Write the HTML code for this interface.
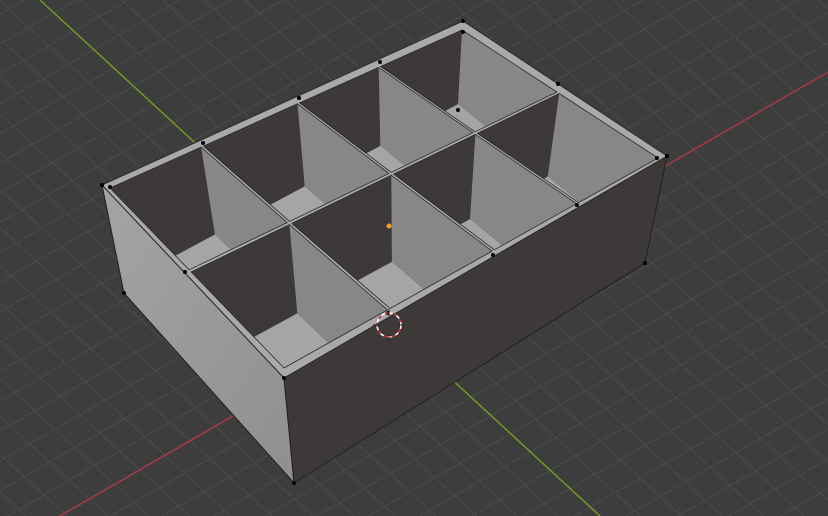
<!DOCTYPE html>
<html><head><meta charset="utf-8"><style>
html,body{margin:0;padding:0;background:#3d3d3d;overflow:hidden;width:828px;height:516px}
svg{display:block}
</style></head><body>
<svg id="s" width="828" height="516" viewBox="0 0 828 516" xmlns="http://www.w3.org/2000/svg">
<rect width="828" height="516" fill="#3d3d3d"/>
<g id="grid" stroke="#4b4b4b" stroke-width="1"></g>
<line x1="40" y1="0" x2="600" y2="516" stroke="#6f9a22" stroke-width="1.5"/>
<line x1="828" y1="72" x2="60" y2="516" stroke="#a43a45" stroke-width="1.5"/>
<g id="box"></g>
</svg>
<script>
var NS="http://www.w3.org/2000/svg";
var grid=document.getElementById('grid');
function ln(g,x1,y1,x2,y2,c,w){var l=document.createElementNS(NS,'line');l.setAttribute('x1',x1);l.setAttribute('y1',y1);l.setAttribute('x2',x2);l.setAttribute('y2',y2);if(c)l.setAttribute('stroke',c);if(w)l.setAttribute('stroke-width',w);g.appendChild(l);}
for(var k=-40;k<=40;k++){var ox=40+k*29*0.87, oy=0-k*29*0.5;
 ln(grid,ox-1000*0.735,oy-1000*0.678,ox+1000*0.735,oy+1000*0.678);}
for(var k=-40;k<=40;k++){var ox=828+k*27*0.735, oy=72+k*27*0.678;
 ln(grid,ox-1000*0.866,oy+1000*0.5,ox+1000*0.866,oy-1000*0.5);}
var box=document.getElementById('box');
function poly(pts,fill,stroke,sw,clip){var p=document.createElementNS(NS,'polygon');p.setAttribute('points',pts.map(function(q){return q[0].toFixed(1)+','+q[1].toFixed(1)}).join(' '));p.setAttribute('fill',fill);if(stroke){p.setAttribute('stroke',stroke);p.setAttribute('stroke-width',sw||1);p.setAttribute('stroke-linejoin','round');}if(clip)p.setAttribute('clip-path','url(#'+clip+')');box.appendChild(p);return p;}
var A=[102,185],B=[463,21],C=[667,156],D=[284,378];
var Ab=[124,293],Db=[294,483],Cb=[645,263];
var lg=document.createElementNS(NS,'linearGradient');lg.setAttribute('id','lf');lg.setAttribute('x1','0');lg.setAttribute('y1','0');lg.setAttribute('x2','1');lg.setAttribute('y2','1');
lg.innerHTML='<stop offset="0" stop-color="#a4a4a4"/><stop offset="1" stop-color="#8f8f8f"/>';
var defs=document.createElementNS(NS,'defs');defs.appendChild(lg);box.appendChild(defs);
poly([A,Ab,Db,D],'url(#lf)','#222',1);
poly([D,Db,Cb,C],'#3d3938','#222',1);
poly([A,B,C,D],'#a9a9a9','#2a2a2a',1);
var a=[110,188],b=[462,30],c=[658,158],d=[284,368];
var ha=[20,92],hb=[-4,74],hc=[-19,92],hd=[9,90];
function bl(P,Q,R,S,u,v){return [(1-u)*(1-v)*P[0]+u*(1-v)*Q[0]+u*v*R[0]+(1-u)*v*S[0],(1-u)*(1-v)*P[1]+u*(1-v)*Q[1]+u*v*R[1]+(1-u)*v*S[1]];}
var UT=[0,.262,.536,.766,1],UB=[0,.28,.56,.785,1];
var VL=[0,.46,1],VR=[0,.49,1];
// grid coordinate: column index fraction s (0..4), row index r (0..2) continuous via lerp
function uv(s,r){ // s,r real
 var i=Math.min(3,Math.floor(s)),fs=s-i; var j=Math.min(1,Math.floor(r)),fr=r-j;
 var vl=VL[j]+(VL[j+1]-VL[j])*fr, vr=VR[j]+(VR[j+1]-VR[j])*fr;
 var ut=UT[i]+(UT[i+1]-UT[i])*fs, ub=UB[i]+(UB[i+1]-UB[i])*fs;
 // approximate: v depends on u, u depends on v
 var u=ut,v=vl;for(var k=0;k<4;k++){v=vl+(vr-vl)*u;u=ut+(ub-ut)*v;}
 return [u,v];}
function P(s,r){var q=uv(s,r);return bl(a,b,c,d,q[0],q[1]);}
function H(s,r){var q=uv(s,r),p=bl(a,b,c,d,q[0],q[1]),h=bl(ha,hb,hc,hd,q[0],q[1]);return [p[0]+h[0],p[1]+h[1]];}
var t=0.012;
for(var i=0;i<4;i++)for(var j=0;j<2;j++){
 var u0=i+(i?t:0),u1=i+1-(i<3?t:0),v0=j+(j?t:0),v1=j+1-(j<1?t:0);
 var TL=P(u0,v0),TR=P(u1,v0),FR=P(u1,v1),FL=P(u0,v1);
 var id='c'+i+j;
 var cp=document.createElementNS(NS,'clipPath');cp.setAttribute('id',id);
 var pp=document.createElementNS(NS,'polygon');pp.setAttribute('points',[TL,TR,FR,FL].map(function(q){return q.join(',')}).join(' '));cp.appendChild(pp);defs.appendChild(cp);
 poly([TL,TR,FR,FL],'#3d3938');
 poly([H(u0,v0),H(u1,v0),H(u1,v1),H(u0,v1)],'#a5a5a5',null,0,id);
 poly([TL,TR,H(u1,v0),H(u0,v0)],'#3d3938',null,0,id);
 poly([TR,FR,H(u1,v1),H(u1,v0)],'#878787',null,0,id);
 poly([TL,TR,FR,FL],'none','#2b2b2b',0.8);
}
var vx=[A,B,C,D,Ab,Db,Cb,[203,143],[299,98],[380,62],[558,84],[185,272],[388,313],[493,255],[577,205],[110,187],[458,110],[463,32],[657,158]];
vx.forEach(function(q){var ci=document.createElementNS(NS,'circle');ci.setAttribute('cx',q[0]);ci.setAttribute('cy',q[1]);ci.setAttribute('r',2);ci.setAttribute('fill','#000');box.appendChild(ci);});
var o=document.createElementNS(NS,'circle');o.setAttribute('cx',389);o.setAttribute('cy',226);o.setAttribute('r',2.5);o.setAttribute('fill','#f0a020');box.appendChild(o);
var g=document.createElementNS(NS,'g');g.innerHTML='<circle cx="389" cy="325" r="12" fill="none" stroke="#fff" stroke-width="1.5" stroke-dasharray="4 4"/><circle cx="389" cy="325" r="12" fill="none" stroke="#d03030" stroke-width="1.5" stroke-dasharray="4 4" stroke-dashoffset="4"/><line x1="373" y1="325" x2="380" y2="325" stroke="#222"/><line x1="398" y1="325" x2="405" y2="325" stroke="#222"/><line x1="389" y1="309" x2="389" y2="316" stroke="#222"/><line x1="389" y1="334" x2="389" y2="341" stroke="#222"/>';box.appendChild(g);
</script>
</body></html>
